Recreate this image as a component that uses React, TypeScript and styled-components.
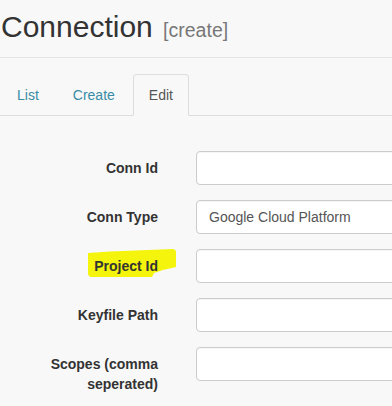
import React from "react";
import styled, {createGlobalStyle} from "styled-components";

const GlobalStyle = createGlobalStyle`
  html, body {
    margin: 0;
    padding: 0;
    overflow: hidden;
    background: #f8f8f8;
  }

  body {
    font-family: "Liberation Sans", Arial, sans-serif;
    font-size: 14px;
    line-height: 20px;
    color: #333;
  }
`;

const Page = styled.div`
  width: 640px;
  padding-left: 1px;
`;

const Header = styled.div`
  padding: 10px 0 14px;
  border-bottom: 1px solid #e6e6e6;
  margin-left: -1px;
  padding-left: 1px;
`;

const Title = styled.h1`
  margin: 0;
  height: 33px;
  font-size: 30px;
  line-height: 33px;
  font-weight: 400;
  color: #333;
`;

const Small = styled.small`
  font-size: 65%;
  line-height: 1;
  color: #777;
  margin-left: 2px;
`;

const Tabs = styled.ul`
  display: flex;
  list-style: none;
  margin: 16px 0 0 -1px;
  padding: 0 0 0 1px;
  border-bottom: 1px solid #ddd;
`;

const Tab = styled.li<{active?: boolean}>`
  margin: 0 2px -1px 0;
  padding: 10px 15px;
  line-height: 20px;
  border: 1px solid ${p => p.active ? "#ddd" : "transparent"};
  border-bottom-color: ${p => p.active ? "#f8f8f8" : "transparent"};
  border-radius: 4px 4px 0 0;
  background: ${p => p.active ? "#f8f8f8" : "transparent"};
  color: ${p => p.active ? "#555" : "#3a8ca6"};
  cursor: pointer;
`;

const Form = styled.form`
  padding-top: 35px;
`;

const Row = styled.div`
  display: grid;
  grid-template-columns: 157px 1fr;
  column-gap: 38px;
  margin-bottom: 15px;
`;

const Label = styled.label`
  padding-top: 7px;
  text-align: right;
  font-weight: 700;
  color: #333;
`;

const Marked = styled.span`
  position: relative;
  display: inline-block;
  z-index: 0;
`;

const Marker = styled.svg`
  position: absolute;
  left: -6px;
  top: -7px;
  width: 88px;
  height: 28px;
  z-index: -1;
`;

const Input = styled.input`
  box-sizing: border-box;
  width: 100%;
  height: 34px;
  padding: 6px 12px;
  border: 1px solid #ccc;
  border-radius: 4px;
  background: #fff;
  font-family: inherit;
  font-size: 14px;
  color: #555;
  box-shadow: inset 0 1px 1px rgba(0, 0, 0, 0.04);
`;

const fields = [
    {label: "Conn Id", value: ""},
    {label: "Conn Type", value: "Google Cloud Platform"},
    {label: "Project Id", value: "", marked: true},
    {label: "Keyfile Path", value: ""},
    {label: "Scopes (comma seperated)", value: ""}
];

export default function App() {
    return (
        <Page>
            <GlobalStyle/>
            <Header>
                <Title>
                    Connection <Small>[create]</Small>
                </Title>
            </Header>

            <Tabs>
                <Tab>List</Tab>
                <Tab>Create</Tab>
                <Tab active>Edit</Tab>
            </Tabs>

            <Form>
                {fields.map(f => (
                    <Row key={f.label}>
                        <Label>
                            {f.marked ? (
                                <Marked>
                                    <Marker viewBox="0 0 88 28" preserveAspectRatio="none">
                                        <path
                                            d="M0 4 L22 2.5 L60 1 L85 0 Q88 0.5 88 3 L88 18 L75 21 L66 24 L64 28 L3 28 Q0 27.5 0 24 Z"
                                            fill="#f4f40c"
                                        />
                                    </Marker>
                                    {f.label}
                                </Marked>
                            ) : f.label}
                        </Label>
                        <Input readOnly defaultValue={f.value}/>
                    </Row>
                ))}
            </Form>
        </Page>
    );
}
